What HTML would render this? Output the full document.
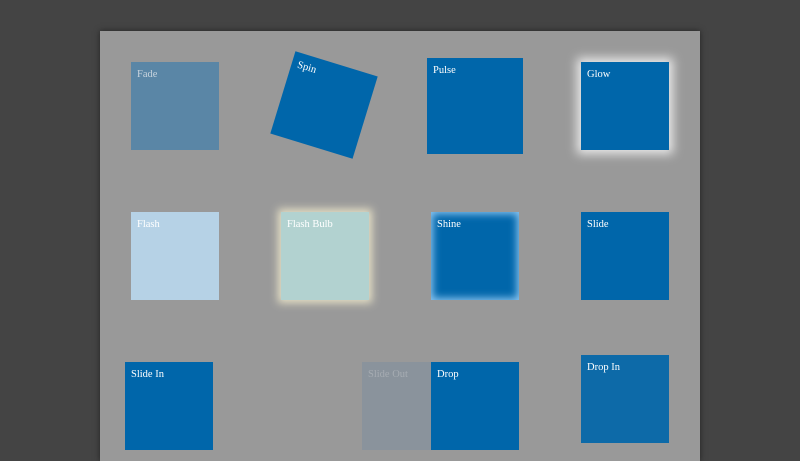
<!DOCTYPE html>
<html><head><style>
body{margin:0;width:800px;height:450px;overflow:hidden;background:#444;position:relative;font-family:"Liberation Serif",serif}
.panel{position:absolute;left:100px;top:31px;width:600px;height:430px;background:#999;box-shadow:0 0 6px rgba(0,0,0,.5)}
.b{position:absolute;width:88px;height:88px;background:#0066aa;color:#fff;font-size:10.5px;box-sizing:border-box;padding:7px 6px}
</style></head><body>
<div class="panel"></div>
<div class="b" style="left:131px;top:62px;background:#5a86a6;color:#c8d4de">Fade</div>
<div class="b" style="left:281px;top:62px;width:86px;height:86px;transform:rotate(17deg)">Spin</div>
<div class="b" style="left:427px;top:58px;width:96px;height:96px">Pulse</div>
<div class="b" style="left:581px;top:62px;box-shadow:0 0 10px 4px rgba(255,255,255,.8)">Glow</div>
<div class="b" style="left:131px;top:212px;background:#b6d2e6">Flash</div>
<div class="b" style="left:281px;top:212px;background:#b2d2d0;box-shadow:0 0 8px 3px #e6e0c6">Flash Bulb</div>
<div class="b" style="left:431px;top:212px;box-shadow:inset 0 0 8px 2px #8ac4f0">Shine</div>
<div class="b" style="left:581px;top:212px">Slide</div>
<div class="b" style="left:125px;top:362px">Slide In</div>
<div class="b" style="left:362px;top:362px;background:#8a939c;color:#a6acb2">Slide Out</div>
<div class="b" style="left:431px;top:362px">Drop</div>
<div class="b" style="left:581px;top:355px;background:#0d6aa8">Drop In</div>
</body></html>
